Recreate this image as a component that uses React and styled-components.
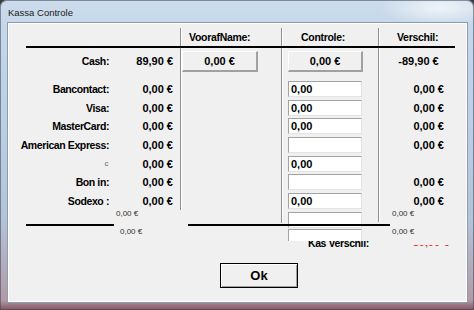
import styled, { createGlobalStyle } from "styled-components";

const Global = createGlobalStyle`
  html, body { margin: 0; padding: 0; background: #3b3a3f; }
  body { width: 474px; height: 310px; overflow: hidden; }
`;

const Window = styled.div`
  width: 474px;
  height: 310px;
  box-sizing: border-box;
  border-radius: 7px 7px 0 0;
  padding: 0 6px 7px 7px;
  display: flex;
  flex-direction: column;
  background:
    radial-gradient(ellipse 60px 18px at 440px 8px, rgba(255,255,255,0.7), rgba(255,255,255,0) 100%),
    linear-gradient(180deg, #cddcec 0px, #c6d8ea 22px, #bccfe3 120px, #b4c3d6 220px, #b39aa6 300px, #84545f 310px);
  box-shadow: inset 0 0 0 1px rgba(60, 70, 90, 0.55);
`;

const TitleBar = styled.div`
  height: 22px;
  display: flex;
  align-items: center;
  padding-left: 1px;
  padding-top: 3px;
  box-sizing: border-box;
  font-family: "Liberation Sans", Arial, sans-serif;
  font-size: 9.5px;
  color: #1a1a1a;
`;

const Client = styled.div`
  flex: 1;
  position: relative;
  background: #f0f0f0;
  border: 1px solid #8a9cb2;
  box-shadow: inset 0 0 0 1px #ffffff;
  padding: 5px 0 0 18px;
  display: flex;
  flex-direction: column;
  font-family: "Liberation Sans", Arial, sans-serif;
  color: #000;
`;

const Table = styled.div`
  display: grid;
  grid-template-columns: 154px 2px 99px 2px 95px 2px 77px;
  grid-template-rows: 18px 2px 31.67px repeat(8, 18.67px) 12px 7px;
`;

const Divider = styled.div`
  grid-column: ${(p) => p.col};
  grid-row: 1 / ${(p) => p.end};
  margin-bottom: ${(p) => p.cut || 0}px;
  border-left: 1px solid #8e8e8e;
  border-right: 1px solid #ffffff;
  box-sizing: border-box;
`;

const HeadLine = styled.div`
  grid-column: 1 / -1;
  grid-row: 2;
  background: #000;
  margin-right: 2px;
`;

const Head = styled.div`
  grid-column: ${(p) => p.col};
  grid-row: 1;
  display: flex;
  align-items: center;
  padding-left: ${(p) => p.pl}px;
  font-weight: bold;
  font-size: 10.5px;
  letter-spacing: -0.3px;
  white-space: nowrap;
`;

const Label = styled.div`
  grid-column: 1;
  grid-row: ${(p) => p.row};
  display: flex;
  align-items: ${(p) => (p.top ? "flex-start" : "center")};
  padding-top: ${(p) => (p.top ? 7 : 0)}px;
  font-weight: bold;
  font-size: 10.5px;
  letter-spacing: -0.4px;
  justify-content: flex-end;
  width: 83px;
  white-space: nowrap;
`;

const Amount = styled.div`
  grid-column: ${(p) => p.col};
  grid-row: ${(p) => p.row};
  display: flex;
  align-items: ${(p) => (p.top ? "flex-start" : "center")};
  padding-top: ${(p) => (p.top ? 7 : 0)}px;
  justify-content: ${(p) => (p.center ? "center" : "flex-end")};
  padding-right: ${(p) => p.pr || 0}px;
  font-weight: bold;
  font-size: 11px;
  white-space: nowrap;
`;

const RaisedButton = styled.div`
  grid-column: ${(p) => p.col};
  grid-row: 3;
  align-self: start;
  margin-top: 3px;
  margin-left: ${(p) => p.ml || 0}px;
  width: ${(p) => p.w}px;
  height: 21px;
  box-sizing: border-box;
  display: flex;
  align-items: center;
  justify-content: center;
  background: #f0f0f0;
  border-top: 1px solid #ffffff;
  border-left: 1px solid #ffffff;
  border-right: 2px solid #a0a0a0;
  border-bottom: 2px solid #a0a0a0;
  font-weight: bold;
  font-size: 11px;
`;

const Input = styled.div`
  grid-column: 5;
  grid-row: ${(p) => p.row};
  align-self: ${(p) => (p.clip ? "start" : "center")};
  margin-left: 5px;
  width: 74px;
  height: ${(p) => (p.clip ? 12 : 16)}px;
  box-sizing: border-box;
  background: #fff;
  border-top: 1px solid #a3a3a3;
  border-left: 1px solid #a3a3a3;
  border-right: 1px solid #e3e3e3;
  border-bottom: ${(p) => (p.clip ? "none" : "1px solid #e3e3e3")};
  padding-left: 2px;
  display: flex;
  align-items: center;
  font-weight: bold;
  font-size: 11px;
`;

const Clip = styled.div`
  grid-column: ${(p) => p.col};
  grid-row: 13;
  overflow: hidden;
  position: relative;
  margin-left: ${(p) => p.ml || 0}px;
  margin-top: ${(p) => p.mt || 0}px;
`;

const ClipText = styled.div`
  position: absolute;
  top: ${(p) => p.top}px;
  left: 0;
  line-height: 13px;
  font-weight: bold;
  font-size: ${(p) => p.size || 11}px;
  letter-spacing: ${(p) => p.ls || 0}px;
  color: ${(p) => p.color || "#000"};
  white-space: nowrap;
`;

const TotalGroup = styled.div`
  position: absolute;
  top: 186px;
  left: ${(p) => p.left}px;
  display: flex;
  align-items: flex-start;
  gap: 2px;
`;

const TotalLine = styled.div`
  width: ${(p) => p.w}px;
  height: 2px;
  margin-top: 15px;
  background: #000;
`;

const SmallStack = styled.div`
  display: flex;
  flex-direction: column;
  gap: 8px;
`;

const Small = styled.div`
  font-size: 8px;
  line-height: 10px;
  color: #333;
  margin-left: ${(p) => p.shift || 0}px;
  white-space: nowrap;
`;

const OkButton = styled.button`
  margin: 15px 0 0 194px;
  width: 78px;
  height: 25px;
  box-sizing: border-box;
  border: 1px solid #000;
  box-shadow: inset 1px 1px 0 #fff, inset -1px -1px 0 #a0a0a0;
  background: #f0f0f0;
  font-family: "Liberation Sans", Arial, sans-serif;
  font-weight: bold;
  font-size: 13px;
  padding: 0;
  color: #000;
`;

const Faint = styled.span`
  font-weight: normal;
  font-size: 8px;
  color: #666;
  padding-right: 1px;
`;

const rows = [
  { label: "Bancontact:", value: "0,00 €", input: "0,00", diff: "0,00 €" },
  { label: "Visa:", value: "0,00 €", input: "0,00", diff: "0,00 €" },
  { label: "MasterCard:", value: "0,00 €", input: "0,00", diff: "0,00 €" },
  { label: "American Express:", value: "0,00 €", input: "", diff: "0,00 €" },
  { label: "c", value: "0,00 €", input: "0,00", diff: "", faint: true },
  { label: "Bon in:", value: "0,00 €", input: "", diff: "0,00 €" },
  { label: "Sodexo :", value: "0,00 €", input: "0,00", diff: "0,00 €" },
];

export default function App() {
  return (
    <>
      <Global />
      <Window>
        <TitleBar>Kassa Controle</TitleBar>
        <Client>
          <Table>
            <Divider col={2} end={11} />
            <Divider col={4} end={12} cut={6} />
            <Divider col={6} end={12} cut={7} />
            <HeadLine />
            <Head col={3} pl={7}>VoorafName:</Head>
            <Head col={5} pl={18}>Controle:</Head>
            <Head col={7} pl={17}>Verschil:</Head>

            <Label row={3} top>
              Cash:
            </Label>
            <Amount col={1} row={3} top pr={7}>
              89,90 €
            </Amount>
            <RaisedButton col={3} w={76}>
              0,00 €
            </RaisedButton>
            <RaisedButton col={5} ml={5} w={75}>
              0,00 €
            </RaisedButton>
            <Amount col={7} row={3} top center>
              -89,90 €
            </Amount>

            {rows.map((r, i) => (
              <Label key={"l" + i} row={4 + i}>
                {r.faint ? <Faint>c</Faint> : r.label}
              </Label>
            ))}
            {rows.map((r, i) => (
              <Amount key={"v" + i} col={1} row={4 + i} pr={7}>
                {r.value}
              </Amount>
            ))}
            {rows.map((r, i) => (
              <Input key={"i" + i} row={4 + i}>
                {r.input}
              </Input>
            ))}
            {rows.map((r, i) =>
              r.diff ? (
                <Amount key={"d" + i} col={7} row={4 + i} pr={13}>
                  {r.diff}
                </Amount>
              ) : null
            )}
            <Input row={11} />
            <Input row={12} clip />
            <Clip col={5} ml={25}>
              <ClipText top={-4} size={10.5} ls={-0.4}>
                Kas Verschil:
              </ClipText>
            </Clip>
            <Clip col={7} ml={29} mt={4}>
              <ClipText top={-9} color="#e8323a">
                -89,90 €
              </ClipText>
            </Clip>
          </Table>

          <TotalGroup left={18}>
            <TotalLine w={88} />
            <SmallStack>
              <Small>0,00 €</Small>
              <Small shift={4}>0,00 €</Small>
            </SmallStack>
          </TotalGroup>
          <TotalGroup left={180}>
            <TotalLine w={202} />
            <SmallStack>
              <Small>0,00 €</Small>
              <Small>0,00 €</Small>
            </SmallStack>
          </TotalGroup>

          <OkButton>Ok</OkButton>
        </Client>
      </Window>
    </>
  );
}
